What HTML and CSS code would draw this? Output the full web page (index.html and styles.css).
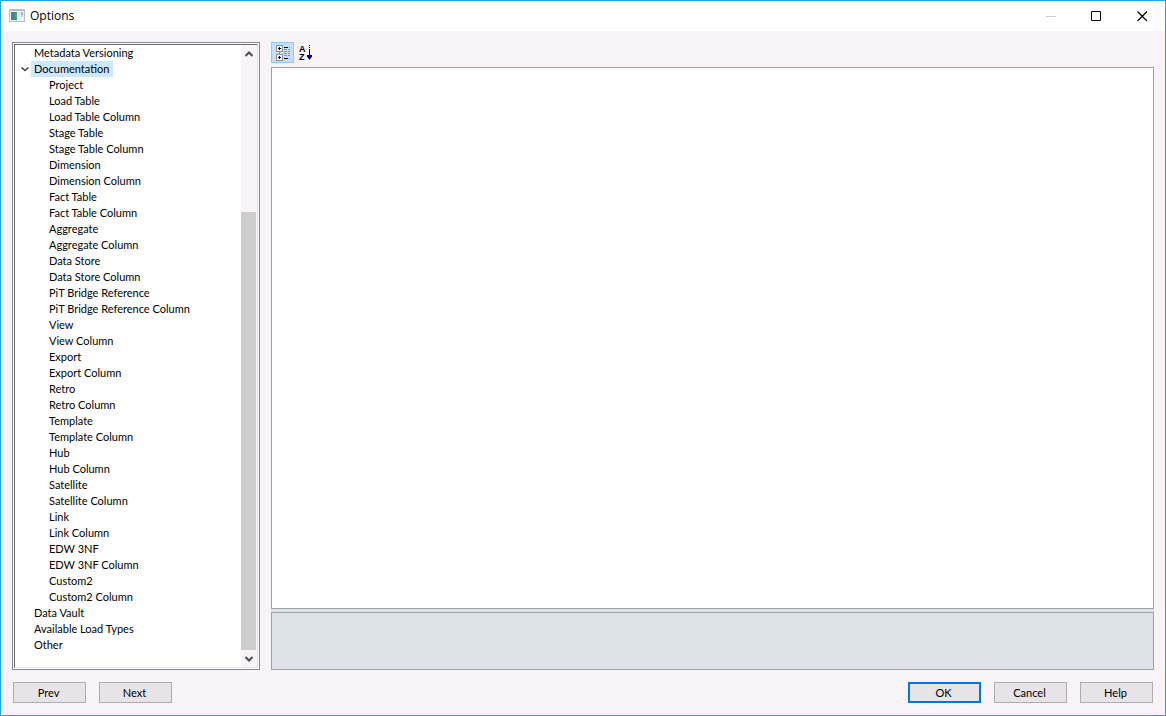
FILE: index.html
```
<!DOCTYPE html>
<html lang="en">
<head>
    <meta charset="UTF-8">
    <meta name="viewport" content="width=device-width, initial-scale=1.0">
    <title>Options</title>
    <link rel="stylesheet" href="styles.css">
</head>
<body>
    <div class="window">
        <!-- Title Bar -->
        <header class="title-bar">
            <svg class="app-icon" width="16" height="14" viewBox="0 0 16 14" shape-rendering="crispEdges">
                <rect x="0" y="0" width="16" height="13" fill="#b9bcc4"/>
                <rect x="1" y="2" width="14" height="10" fill="#eef0f2"/>
                <rect x="2" y="3" width="6" height="8" fill="#3f8a86"/>
                <rect x="2" y="3" width="2" height="4" fill="#4a78a8"/>
                <rect x="6" y="4" width="2" height="5" fill="#4fa07c"/>
                <rect x="9" y="3" width="2" height="8" fill="#e0e2e6"/>
                <rect x="12" y="3" width="2" height="4" fill="#8fb2dd"/>
                <rect x="12" y="6" width="2" height="2" fill="#c5dcc0"/>
            </svg>
            <h1>Options</h1>
            <div class="window-controls">
                <button type="button" aria-label="Minimize" disabled>
                    <svg width="11" height="11" viewBox="0 0 11 11"><path d="M1 5.5h10" stroke="#ccc"/></svg>
                </button>
                <button type="button" aria-label="Maximize">
                    <svg width="11" height="11" viewBox="0 0 11 11"><path d="M.5.5h9v9h-9z" fill="none" stroke="#000"/></svg>
                </button>
                <button type="button" aria-label="Close">
                    <svg width="11" height="11" viewBox="0 0 11 11"><path d="M.5.5l9.500 9.500M10 .5L.5 10" stroke="#000" stroke-width="1.2"/></svg>
                </button>
            </div>
        </header>

        <main>
            <!-- Options Tree -->
            <nav class="tree-box">
                <div class="tree-inner">
                    <ul class="tree">
                        <li><a href="#">Metadata Versioning</a></li>
                        <li>
                            <svg class="chevron" width="8" height="5" viewBox="0 0 8 5"><path d="M.5.5L4 3.500 7.5.5" fill="none" stroke="#404040" stroke-width="1.500"/></svg>
                            <a href="#" class="selected">Documentation</a>
                            <ul>
                                <li><a href="#">Project</a></li>
                                <li><a href="#">Load Table</a></li>
                                <li><a href="#">Load Table Column</a></li>
                                <li><a href="#">Stage Table</a></li>
                                <li><a href="#">Stage Table Column</a></li>
                                <li><a href="#">Dimension</a></li>
                                <li><a href="#">Dimension Column</a></li>
                                <li><a href="#">Fact Table</a></li>
                                <li><a href="#">Fact Table Column</a></li>
                                <li><a href="#">Aggregate</a></li>
                                <li><a href="#">Aggregate Column</a></li>
                                <li><a href="#">Data Store</a></li>
                                <li><a href="#">Data Store Column</a></li>
                                <li><a href="#">PiT Bridge Reference</a></li>
                                <li><a href="#">PiT Bridge Reference Column</a></li>
                                <li><a href="#">View</a></li>
                                <li><a href="#">View Column</a></li>
                                <li><a href="#">Export</a></li>
                                <li><a href="#">Export Column</a></li>
                                <li><a href="#">Retro</a></li>
                                <li><a href="#">Retro Column</a></li>
                                <li><a href="#">Template</a></li>
                                <li><a href="#">Template Column</a></li>
                                <li><a href="#">Hub</a></li>
                                <li><a href="#">Hub Column</a></li>
                                <li><a href="#">Satellite</a></li>
                                <li><a href="#">Satellite Column</a></li>
                                <li><a href="#">Link</a></li>
                                <li><a href="#">Link Column</a></li>
                                <li><a href="#">EDW 3NF</a></li>
                                <li><a href="#">EDW 3NF Column</a></li>
                                <li><a href="#">Custom2</a></li>
                                <li><a href="#">Custom2 Column</a></li>
                            </ul>
                        </li>
                        <li><a href="#">Data Vault</a></li>
                        <li><a href="#">Available Load Types</a></li>
                        <li><a href="#">Other</a></li>
                    </ul>
                    <div class="scrollbar">
                        <button type="button" aria-label="Scroll up">
                            <svg width="8" height="6" viewBox="0 0 8 6"><path d="M.5 5L4 1.5 7.5 5" fill="none" stroke="#505050" stroke-width="2"/></svg>
                        </button>
                        <div class="track"><div class="thumb"></div></div>
                        <button type="button" aria-label="Scroll down">
                            <svg width="8" height="6" viewBox="0 0 8 6"><path d="M.5 1L4 4.5 7.5 1" fill="none" stroke="#505050" stroke-width="2"/></svg>
                        </button>
                    </div>
                </div>
            </nav>

            <!-- Property Grid -->
            <section class="properties">
                <div class="toolbar">
                    <button type="button" class="active" aria-label="Categorized">
                        <svg width="17" height="17" viewBox="0 0 17 17" shape-rendering="crispEdges">
                            <path d="M2.5 1.5h6v6h-6zM2.5 10.5h6v6h-6z" fill="#fff" stroke="#909090"/>
                            <path d="M5.5 8v2" stroke="#909090"/>
                            <path d="M4 4.5h3M5.5 3v3M4 13.5h3M5.5 12v3M10 3.5h4M10 14.5h4" stroke="#000"/>
                            <path d="M10 5.5h6M10 7.5h6M10 9.5h6M10 11.5h6M15 3.5h1M15 14.5h1" stroke="#909090" stroke-dasharray="3 1"/>
                        </svg>
                    </button>
                    <button type="button" aria-label="Alphabetical">
                        <svg width="17" height="17" viewBox="0 0 17 17">
                            <text x="2" y="8">A</text>
                            <text x="2" y="16">Z</text>
                            <path d="M12.500 1v1M12.500 3v1M12.500 5v10" stroke="#000080" shape-rendering="crispEdges"/>
                            <path d="M10 11h5v1.500L12.500 16 10 12.500z" fill="#000080"/>
                        </svg>
                    </button>
                </div>
                <div class="grid-view"></div>
                <div class="description"></div>
            </section>
        </main>

        <!-- Dialog Buttons -->
        <footer>
            <button type="button">Prev</button>
            <button type="button">Next</button>
            <button type="button" class="default">OK</button>
            <button type="button">Cancel</button>
            <button type="button">Help</button>
        </footer>
    </div>
</body>
</html>
```
FILE: styles.css
```
* {
    margin: 0;
    padding: 0;
    box-sizing: border-box;
}

body {
    font-family: Lato, sans-serif;
    font-size: 11px;
    color: #000;
}

button {
    font: inherit;
    color: inherit;
    border: none;
    background: none;
}

svg {
    display: block;
}

.window {
    display: flex;
    flex-direction: column;
    height: 100vh;
    border: 1px solid #1ba8e0;
    background-color: #f7f3f7;
}

/* Title Bar */
.title-bar {
    display: flex;
    align-items: center;
    height: 30px;
    padding-left: 8px;
    background-color: #fff;
}

.title-bar h1 {
    margin-left: 5px;
    padding-bottom: 2px;
    font-family: "Open Sans", sans-serif;
    font-size: 12px;
    font-weight: normal;
}

.window-controls {
    display: flex;
    height: 100%;
    margin-left: auto;
}

.window-controls button {
    display: flex;
    align-items: center;
    justify-content: center;
    width: 46px;
}

main {
    display: flex;
    flex: 1;
    gap: 11px;
    min-height: 0;
    padding: 11px 11px 0;
}

/* Options Tree */
.tree-box {
    width: 248px;
    padding: 1px;
    border: 1px solid #828790;
    background-color: #fff;
}

.tree-inner {
    display: flex;
    height: 100%;
    border: 1px solid;
    border-color: #696969 #e3e3e3 #e3e3e3 #696969;
}

.tree {
    flex: 1;
    overflow: hidden;
    list-style: none;
}

.tree li {
    position: relative;
    padding-left: 16px;
    line-height: 16px;
}

.tree ul {
    list-style: none;
}

.tree ul li {
    padding-left: 15px;
}

.tree a {
    display: block;
    width: max-content;
    padding: 0 4px 0 3px;
    color: inherit;
    text-decoration: none;
}

.tree a.selected {
    background-color: #cce8ff;
}

.chevron {
    position: absolute;
    top: 6px;
    left: 6px;
}

.scrollbar {
    display: flex;
    flex-direction: column;
    width: 16px;
    padding-right: 1px;
    background-color: #f7f3f7;
}

.scrollbar button {
    display: flex;
    align-items: center;
    justify-content: center;
    height: 17px;
}

.track {
    display: flex;
    flex: 1;
    flex-direction: column;
    justify-content: flex-end;
}

.thumb {
    height: 74.5%;
    background-color: #cdcdcd;
}

/* Property Grid */
.properties {
    display: flex;
    flex: 1;
    flex-direction: column;
}

.toolbar {
    display: flex;
    height: 25px;
}

.toolbar button {
    display: flex;
    align-items: center;
    justify-content: center;
    width: 23px;
    height: 21px;
    border: 1px solid transparent;
}

.toolbar button.active {
    border-color: #90c8f6;
    background-color: #c8def5;
}

.toolbar text {
    font-family: "Liberation Sans", sans-serif;
    font-size: 9px;
    font-weight: bold;
}

.grid-view {
    flex: 1;
    border: 1px solid #a0a0a0;
    background-color: #fff;
}

.description {
    height: 58px;
    margin-top: 3px;
    border: 1px solid #a0a0a0;
    background-color: #dde3e6;
    box-shadow: 0 -3px #dde3e6;
}

/* Dialog Buttons */
footer {
    display: flex;
    gap: 13px;
    padding: 12px;
}

footer button {
    width: 73px;
    height: 21px;
    padding-right: 2px;
    border: 1px solid #adadad;
    background-color: #e7e3e7;
}

footer .default {
    margin-left: auto;
    border: 2px solid #0078d7;
}
```
